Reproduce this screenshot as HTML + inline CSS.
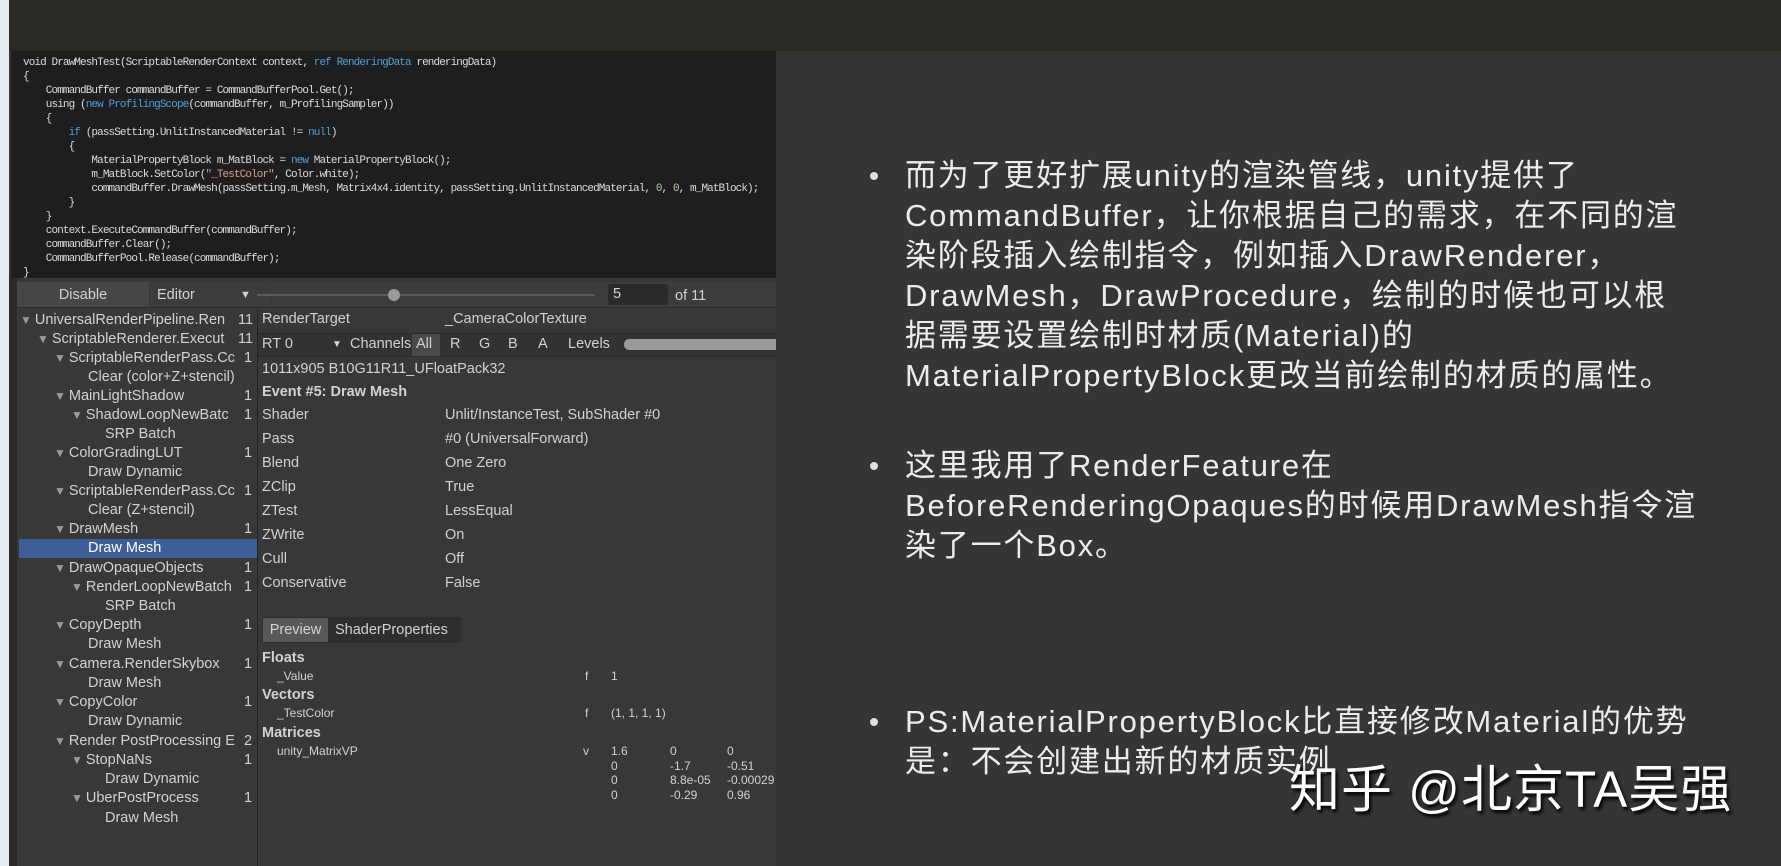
<!DOCTYPE html>
<html><head><meta charset="utf-8"><style>
*{margin:0;padding:0;box-sizing:border-box}
body{width:1781px;height:866px;overflow:hidden;background:#353535;position:relative;font-family:"Liberation Sans","Noto Sans CJK SC",sans-serif}
.a{position:absolute;white-space:nowrap}
#top{left:0;top:0;width:1781px;height:51px;background:#2c2a25}
#strip{left:0;top:0;width:9px;height:866px;background:#e4ebee}
#code{left:11px;top:51px;width:765px;height:228px;background:#1e1e1e;font-family:"Liberation Mono",monospace;font-size:11px;letter-spacing:-0.9px;color:#dcdcdc;overflow:hidden}
#code .l{position:absolute;left:12px;white-space:pre;line-height:14px}
.k{color:#569cd6}.s{color:#d69d85}.n{color:#b5cea8}
#unity{left:17px;top:278px;width:759px;height:588px;background:#383838;overflow:hidden;color:#d2d2d2;font-size:14.5px}
#uleft{left:9px;top:278px;width:8px;height:588px;background:#2b2b2b}
.tb{position:absolute;top:4px;height:26px;background:#3c3c3c;border-bottom:1px solid #2a2a2a}
.tr{position:absolute;height:19px;line-height:19px;white-space:nowrap}
.tri{font-size:12px;color:#9a9a9a;margin-right:3px}
.cnt{position:absolute;left:227px;}
.dl{position:absolute;left:245px;white-space:nowrap}
.dv{position:absolute;left:428px;white-space:nowrap}
.txt{position:absolute;left:905px;color:#ececec;font-size:31px;letter-spacing:1.8px;line-height:40px;font-family:"Liberation Sans","Noto Sans CJK SC",sans-serif;white-space:nowrap}
.dot{position:absolute;left:870px;width:8px;height:8px;border-radius:50%;background:#e0e0e0}
</style></head><body>
<div class="a" id="top"></div>
<div class="a" id="strip"></div>
<div class="a" id="code">
<div class="l" style="top:5px">void DrawMeshTest(ScriptableRenderContext context, <span class="k">ref</span> <span class="k">RenderingData</span> renderingData)</div>
<div class="l" style="top:19px">{</div>
<div class="l" style="top:33px">    CommandBuffer commandBuffer = CommandBufferPool.Get();</div>
<div class="l" style="top:47px">    using (<span class="k">new</span> <span class="k">ProfilingScope</span>(commandBuffer, m_ProfilingSampler))</div>
<div class="l" style="top:61px">    {</div>
<div class="l" style="top:75px">        <span class="k">if</span> (passSetting.UnlitInstancedMaterial != <span class="k">null</span>)</div>
<div class="l" style="top:89px">        {</div>
<div class="l" style="top:103px">            MaterialPropertyBlock m_MatBlock = <span class="k">new</span> MaterialPropertyBlock();</div>
<div class="l" style="top:117px">            m_MatBlock.SetColor(<span class="s">"_TestColor"</span>, Color.white);</div>
<div class="l" style="top:131px">            commandBuffer.DrawMesh(passSetting.m_Mesh, Matrix4x4.identity, passSetting.UnlitInstancedMaterial, <span class="n">0</span>, <span class="n">0</span>, m_MatBlock);</div>
<div class="l" style="top:145px">        }</div>
<div class="l" style="top:159px">    }</div>
<div class="l" style="top:173px">    context.ExecuteCommandBuffer(commandBuffer);</div>
<div class="l" style="top:187px">    commandBuffer.Clear();</div>
<div class="l" style="top:201px">    CommandBufferPool.Release(commandBuffer);</div>
<div class="l" style="top:215px">}</div>
</div>
<div class="a" id="uleft"></div>
<div class="a" id="unity">
<div class="tb" style="left:0;width:132px;background:#464646;text-align:center;line-height:26px">Disable</div>
<div class="tb" style="left:133px;width:121px;line-height:26px;padding-left:7px">Editor<span style="position:absolute;left:90px;font-size:11px">▼</span></div>
<div class="tb" style="left:255px;width:504px"></div>
<div class="a" style="left:240px;top:16px;width:338px;height:2px;background:#5a5a5a"></div>
<div class="a" style="left:371px;top:11px;width:12px;height:12px;border-radius:50%;background:#9a9a9a"></div>
<div class="a" style="left:591px;top:6px;width:60px;height:21px;background:#2a2a2a;border-radius:3px;padding-left:5px;line-height:21px">5</div>
<div class="a" style="left:658px;top:10px;line-height:16px">of 11</div>
<div class="a" style="left:240px;top:31px;width:1px;height:557px;background:#232323"></div>
<div class="a" style="left:0;top:33px;width:240px;height:555px;overflow:hidden">
<div class="a" style="left:2px;top:228px;width:238px;height:19px;background:#3d5e98"></div>
<div class="tr" style="top:0;left:3px"><span class="tri">▼</span>UniversalRenderPipeline.Ren</div><div class="tr cnt" style="top:0;left:221px">11</div>
<div class="tr" style="top:19px;left:20px"><span class="tri">▼</span>ScriptableRenderer.Execut</div><div class="tr cnt" style="top:19px;left:221px">11</div>
<div class="tr" style="top:38px;left:37px"><span class="tri">▼</span>ScriptableRenderPass.Cc</div><div class="tr cnt" style="top:38px">1</div>
<div class="tr" style="top:57px;left:71px">Clear (color+Z+stencil)</div>
<div class="tr" style="top:76px;left:37px"><span class="tri">▼</span>MainLightShadow</div><div class="tr cnt" style="top:76px">1</div>
<div class="tr" style="top:95px;left:54px"><span class="tri">▼</span>ShadowLoopNewBatc</div><div class="tr cnt" style="top:95px">1</div>
<div class="tr" style="top:114px;left:88px">SRP Batch</div>
<div class="tr" style="top:133px;left:37px"><span class="tri">▼</span>ColorGradingLUT</div><div class="tr cnt" style="top:133px">1</div>
<div class="tr" style="top:152px;left:71px">Draw Dynamic</div>
<div class="tr" style="top:171px;left:37px"><span class="tri">▼</span>ScriptableRenderPass.Cc</div><div class="tr cnt" style="top:171px">1</div>
<div class="tr" style="top:190px;left:71px">Clear (Z+stencil)</div>
<div class="tr" style="top:209px;left:37px"><span class="tri">▼</span>DrawMesh</div><div class="tr cnt" style="top:209px">1</div>
<div class="tr" style="top:228px;left:71px;color:#fff">Draw Mesh</div>
<div class="tr" style="top:248px;left:37px"><span class="tri">▼</span>DrawOpaqueObjects</div><div class="tr cnt" style="top:248px">1</div>
<div class="tr" style="top:267px;left:54px"><span class="tri">▼</span>RenderLoopNewBatch</div><div class="tr cnt" style="top:267px">1</div>
<div class="tr" style="top:286px;left:88px">SRP Batch</div>
<div class="tr" style="top:305px;left:37px"><span class="tri">▼</span>CopyDepth</div><div class="tr cnt" style="top:305px">1</div>
<div class="tr" style="top:324px;left:71px">Draw Mesh</div>
<div class="tr" style="top:344px;left:37px"><span class="tri">▼</span>Camera.RenderSkybox</div><div class="tr cnt" style="top:344px">1</div>
<div class="tr" style="top:363px;left:71px">Draw Mesh</div>
<div class="tr" style="top:382px;left:37px"><span class="tri">▼</span>CopyColor</div><div class="tr cnt" style="top:382px">1</div>
<div class="tr" style="top:401px;left:71px">Draw Dynamic</div>
<div class="tr" style="top:421px;left:37px"><span class="tri">▼</span>Render PostProcessing E</div><div class="tr cnt" style="top:421px">2</div>
<div class="tr" style="top:440px;left:54px"><span class="tri">▼</span>StopNaNs</div><div class="tr cnt" style="top:440px">1</div>
<div class="tr" style="top:459px;left:88px">Draw Dynamic</div>
<div class="tr" style="top:478px;left:54px"><span class="tri">▼</span>UberPostProcess</div><div class="tr cnt" style="top:478px">1</div>
<div class="tr" style="top:498px;left:88px">Draw Mesh</div>
</div>
<div class="dl" style="top:33px">RenderTarget</div><div class="dv" style="top:33px">_CameraColorTexture</div>
<div class="a" style="left:241px;top:55px;width:518px;height:24px;background:#323232;border-top:1px solid #2a2a2a;border-bottom:1px solid #2a2a2a"></div>
<div class="dl" style="top:58px">RT 0<span style="position:absolute;left:70px;font-size:10px;top:3px">▼</span></div>
<div class="a" style="left:333px;top:58px">Channels</div>
<div class="a" style="left:395px;top:56px;width:28px;height:22px;background:#4a4a4a"></div>
<div class="a" style="left:399px;top:58px">All</div>
<div class="a" style="left:433px;top:58px">R</div>
<div class="a" style="left:462px;top:58px">G</div>
<div class="a" style="left:491px;top:58px">B</div>
<div class="a" style="left:521px;top:58px">A</div>
<div class="a" style="left:551px;top:58px">Levels</div>
<div class="a" style="left:607px;top:61px;width:152px;height:11px;background:#9a9a9a;border-radius:5px 0 0 5px"></div>
<div class="dl" style="top:83px">1011x905 B10G11R11_UFloatPack32</div>
<div class="dl" style="top:106px;font-weight:bold">Event #5: Draw Mesh</div>
<div class="dl" style="top:129px">Shader</div><div class="dv" style="top:129px">Unlit/InstanceTest, SubShader #0</div>
<div class="dl" style="top:153px">Pass</div><div class="dv" style="top:153px">#0 (UniversalForward)</div>
<div class="dl" style="top:177px">Blend</div><div class="dv" style="top:177px">One Zero</div>
<div class="dl" style="top:201px">ZClip</div><div class="dv" style="top:201px">True</div>
<div class="dl" style="top:225px">ZTest</div><div class="dv" style="top:225px">LessEqual</div>
<div class="dl" style="top:249px">ZWrite</div><div class="dv" style="top:249px">On</div>
<div class="dl" style="top:273px">Cull</div><div class="dv" style="top:273px">Off</div>
<div class="dl" style="top:297px">Conservative</div><div class="dv" style="top:297px">False</div>
<div class="a" style="left:245px;top:339px;width:199px;height:26px;background:#2e2e2e;border-radius:2px"></div>
<div class="a" style="left:246px;top:340px;width:65px;height:24px;background:#585858;line-height:24px;text-align:center">Preview</div>
<div class="a" style="left:318px;top:340px;line-height:24px">ShaderProperties</div>
<div class="dl" style="top:372px;font-weight:bold">Floats</div>
<div class="dl" style="top:391px;left:260px;font-size:12px">_Value</div>
<div class="a" style="left:568px;top:391px;font-size:12px">f</div><div class="a" style="left:594px;top:391px;font-size:12px">1</div>
<div class="dl" style="top:409px;font-weight:bold">Vectors</div>
<div class="dl" style="top:428px;left:260px;font-size:12px">_TestColor</div>
<div class="a" style="left:568px;top:428px;font-size:12px">f</div><div class="a" style="left:594px;top:428px;font-size:12px">(1, 1, 1, 1)</div>
<div class="dl" style="top:447px;font-weight:bold">Matrices</div>
<div class="dl" style="top:466px;left:260px;font-size:12px">unity_MatrixVP</div>
<div class="a" style="left:566px;top:466px;font-size:12px">v</div>
<div class="a" style="left:594px;top:466px;font-size:12px;line-height:14.5px">1.6<br>0<br>0<br>0</div>
<div class="a" style="left:653px;top:466px;font-size:12px;line-height:14.5px">0<br>-1.7<br>8.8e-05<br>-0.29</div>
<div class="a" style="left:710px;top:466px;font-size:12px;line-height:14.5px">0<br>-0.51<br>-0.00029<br>0.96</div>
</div>
<div class="dot" style="top:172px"></div>
<div class="txt" style="top:156px">而为了更好扩展unity的渲染管线，unity提供了<br>CommandBuffer，让你根据自己的需求，在不同的渲<br>染阶段插入绘制指令，例如插入DrawRenderer，<br>DrawMesh，DrawProcedure，绘制的时候也可以根<br>据需要设置绘制时材质(Material)的<br>MaterialPropertyBlock更改当前绘制的材质的属性。</div>
<div class="dot" style="top:462px"></div>
<div class="txt" style="top:446px">这里我用了RenderFeature在<br>BeforeRenderingOpaques的时候用DrawMesh指令渲<br>染了一个Box。</div>
<div class="dot" style="top:718px"></div>
<div class="txt" style="top:702px">PS:MaterialPropertyBlock比直接修改Material的优势<br>是：不会创建出新的材质实例</div>
<div class="a" style="left:1289px;top:760px;font-size:51px;letter-spacing:1px;line-height:60px;color:#fff;text-shadow:2px 3px 3px #000">知乎 @北京TA吴强</div>
</body></html>
